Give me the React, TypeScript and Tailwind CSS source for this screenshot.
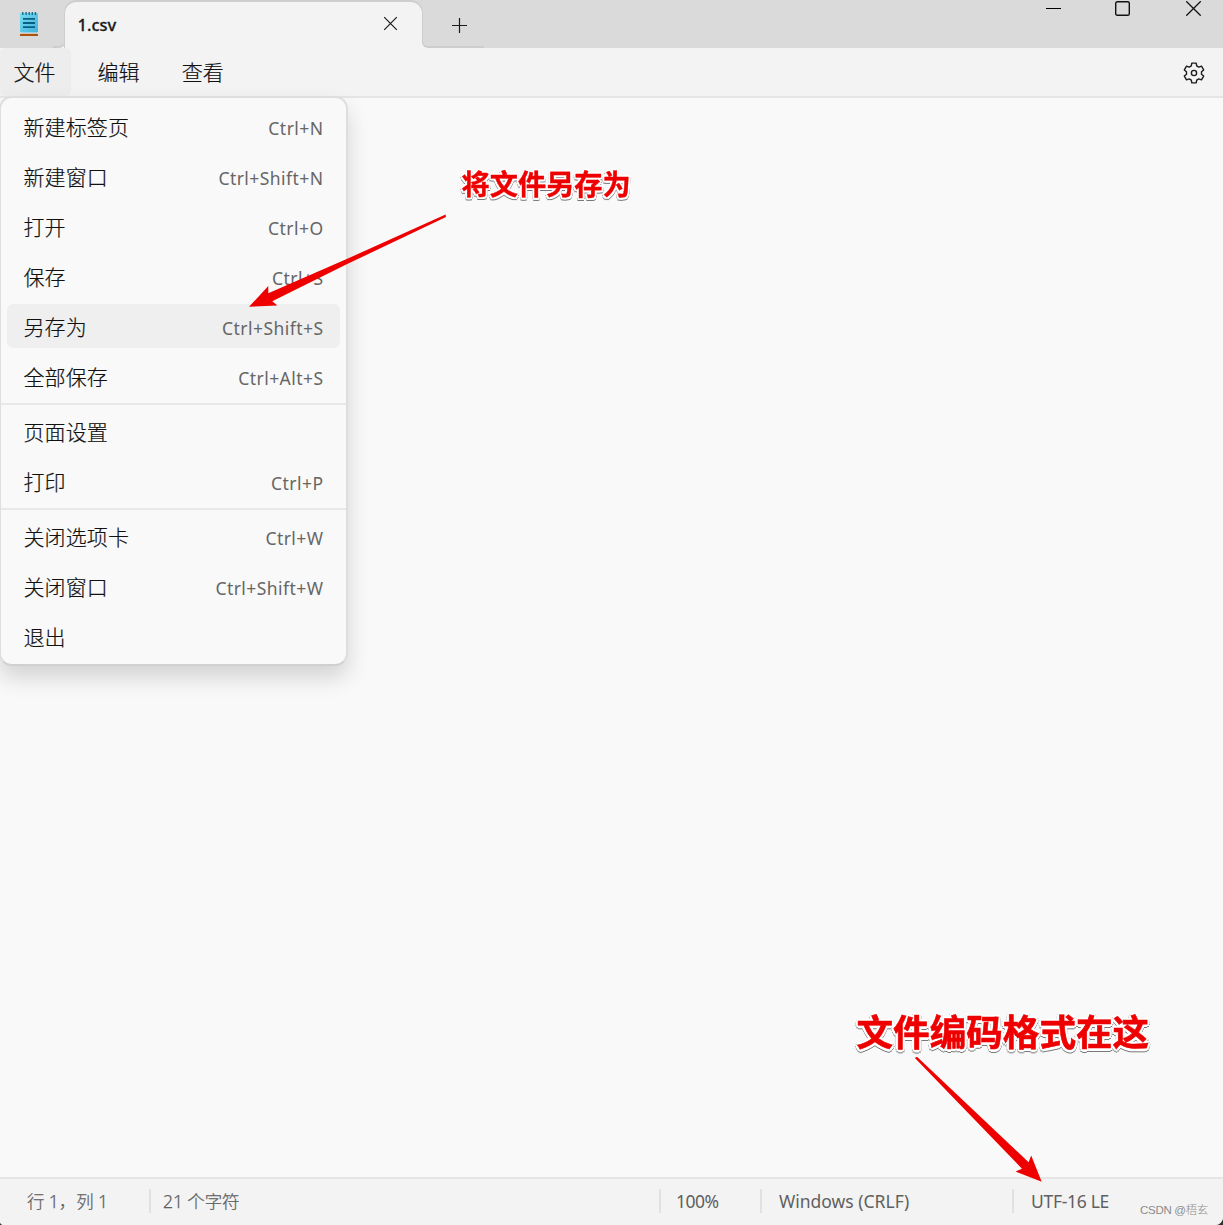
import clsx from 'clsx';

interface MenuItem {
  label: string;
  shortcut?: string;
  active?: boolean;
}

const MENU_GROUPS: MenuItem[][] = [
  [
    { label: '新建标签页', shortcut: 'Ctrl+N' },
    { label: '新建窗口', shortcut: 'Ctrl+Shift+N' },
    { label: '打开', shortcut: 'Ctrl+O' },
    { label: '保存', shortcut: 'Ctrl+S' },
    { label: '另存为', shortcut: 'Ctrl+Shift+S', active: true },
    { label: '全部保存', shortcut: 'Ctrl+Alt+S' },
  ],
  [{ label: '页面设置' }, { label: '打印', shortcut: 'Ctrl+P' }],
  [
    { label: '关闭选项卡', shortcut: 'Ctrl+W' },
    { label: '关闭窗口', shortcut: 'Ctrl+Shift+W' },
    { label: '退出' },
  ],
];

// One tooth pointing up; repeated every 60 degrees.
const TOOTH = [
  [-2.7, -7.1],
  [-2.2, -9.9],
  [2.2, -9.9],
  [2.7, -7.1],
];

function gearPoints() {
  const points: string[] = [];
  for (let i = 0; i < 6; i++) {
    const a = (i * Math.PI) / 3;
    for (const [x, y] of TOOTH) {
      points.push(`${(x * Math.cos(a) - y * Math.sin(a)).toFixed(2)},${(x * Math.sin(a) + y * Math.cos(a)).toFixed(2)}`);
    }
  }
  return points.join(' ');
}

function GearIcon() {
  return (
    <svg width="24" height="24" viewBox="-12 -12 24 24" fill="none" stroke="#1c1c1c" strokeWidth="1.4" strokeLinejoin="round">
      <polygon points={gearPoints()} />
      <circle r="2.6" />
    </svg>
  );
}

function NotepadIcon() {
  return (
    <svg width="18" height="25" viewBox="0 0 18 25">
      <defs>
        <linearGradient id="page" x1="0" y1="0" x2="1" y2="1">
          <stop offset="0" stopColor="#7bdcf0" />
          <stop offset="1" stopColor="#3fb2dc" />
        </linearGradient>
      </defs>
      <rect y="20" width="18" height="2" fill="#e8e8e8" />
      <rect y="21.7" width="18" height="2.3" rx="0.6" fill="#ab5310" />
      <rect y="1" width="18" height="19.4" rx="0.8" fill="url(#page)" />
      <path d="M2.8 0v3M6.1 0v3M9.2 0v3M12.3 0v3M15.4 0v3" stroke="#1a6f8e" strokeWidth="1.4" />
      <path d="M3 6.8h12M3 11h12M3 15.200h12" stroke="#075f84" strokeWidth="1.8" />
    </svg>
  );
}

function TitleBar() {
  return (
    <header className="flex h-12 bg-[#dadada]">
      <div className="flex w-[53px] pt-3 pl-5">
        <NotepadIcon />
      </div>
      <div className="mt-auto flex h-4 w-[12px] bg-[#f3f3f3]">
        <div className="h-4 w-full rounded-br-[6px] border-r border-b-2 border-[#cdcdcd] bg-[#dadada]" />
      </div>
      <div className="-ml-px w-[359px] flex rounded-t-[13px] border-x border-t-2 border-[#cdcdcd] bg-[#f3f3f3]">
        <span className="mt-[11px] ml-[12.5px] text-[16.5px] leading-6 font-medium text-[#1b1b1b] [-webkit-text-stroke:0.3px_#1b1b1b]">1.csv</span>
        <svg className="mt-[14px] mr-6 ml-auto" width="15" height="15" viewBox="0 0 15 15" stroke="#1b1b1b" strokeWidth="1.2">
          <path d="M1.2 1.2l12.6 12.6M13.8 1.2L1.2 13.8" />
        </svg>
      </div>
      <div className="-ml-px mt-auto flex h-3 w-[62px] bg-[#f3f3f3]">
        <div className="h-3 w-full rounded-bl-[6px] border-b-2 border-l border-[#cdcdcd] bg-[#dadada]" />
      </div>
      <svg className="mt-[18px] -ml-8" width="15" height="15" viewBox="0 0 15 15" stroke="#1b1b1b" strokeWidth="1.2">
        <path d="M7.5 0v15M0 7.5h15" />
      </svg>
      <div className="mt-px mr-[22px] ml-auto flex">
        <svg className="mr-[54px]" width="15" height="15" viewBox="0 0 15 15" stroke="#000">
          <path d="M0 7.5h15" />
        </svg>
        <svg className="mr-14" width="15" height="15" viewBox="0 0 15 15" fill="none" stroke="#111" strokeWidth="1.4">
          <rect x="0.7" y="0.7" width="13.6" height="13.6" rx="1.6" />
        </svg>
        <svg width="15" height="15" viewBox="0 0 15 15" stroke="#111" strokeWidth="1.3">
          <path d="M0.3 0.3l14.4 14.4M14.7 0.3L0.3 14.7" />
        </svg>
      </div>
    </header>
  );
}

function MenuBar() {
  return (
    <nav className="flex h-[50px] border-b-2 border-[#e5e5e5] bg-[#f3f3f3] text-[21px] leading-[49px] font-light tracking-[0.1px] text-[#111] [-webkit-text-stroke:0.2px_#111]">
      <span className="w-[71px] rounded-md bg-[#ededed] pl-[13.5px]">文件</span>
      <span className="ml-[26.5px]">编辑</span>
      <span className="ml-[42px]">查看</span>
      <span className="mt-[13px] mr-[17px] ml-auto">
        <GearIcon />
      </span>
    </nav>
  );
}

function FileMenu() {
  return (
    <div className="absolute top-[96px] -left-px w-[349px] rounded-[13px] border-2 border-[#dedede] border-b-[#d0d0d0] bg-[#f9f9f9] py-[3px] shadow-[0_12px_22px_rgba(0,0,0,0.15)]">
      {MENU_GROUPS.map((group, i) => (
        <div key={i}>
          {i > 0 && <div className="mt-[2px] mb-px h-[2px] bg-[#e8e8e8]" />}
          {group.map((item) => (
            <div key={item.label} className="h-[50px] px-[6px] py-[3px]">
              <div
                className={clsx(
                  'flex h-11 items-center justify-between rounded-md px-[16.5px]',
                  item.active && 'bg-[#efefef]',
                )}
              >
                <span className="pt-[2px] text-[21px] leading-[46px] font-light tracking-[0.1px] text-[#111] [-webkit-text-stroke:0.2px_#111]">
                  {item.label}
                </span>
                <span className="pt-[5px] text-[17.5px] tracking-[0.45px] text-[#666]">{item.shortcut}</span>
              </div>
            </div>
          ))}
        </div>
      ))}
    </div>
  );
}

function Divider() {
  return <span className="mt-[10px] h-6 w-[2px] bg-[#e1e1e1]" />;
}

function StatusBar() {
  return (
    <footer className="flex h-12 border-t-2 border-[#e5e5e5] bg-[#f3f3f3] text-[17.5px] leading-[44px] whitespace-nowrap text-[#606060]">
      <span className="w-[149px] pl-[27px] font-light tracking-[-0.1px] [-webkit-text-stroke:0.25px_#606060]">行 1，列 1</span>
      <Divider />
      <span className="w-[508px] pl-3 font-light tracking-[-0.1px] [-webkit-text-stroke:0.25px_#606060]">21 个字符</span>
      <Divider />
      <span className="w-[99px] pl-[15px] tracking-[-0.5px]">100%</span>
      <Divider />
      <span className="w-[250px] pl-[17px]">Windows (CRLF)</span>
      <Divider />
      <span className="pl-[17px] tracking-[-0.3px]">UTF-16 LE</span>
    </footer>
  );
}

function Annotations() {
  return (
    <>
      <div className="absolute top-[163px] left-[461.5px] text-[28.2px] leading-[42px] font-bold whitespace-nowrap text-[#ee0000] [-webkit-text-stroke:0.4px_#ee0000] [filter:drop-shadow(0.5px_1px_0.6px_#777)] [text-shadow:2px_0_#fff,-2px_0_#fff,0_2px_#fff,0_-2px_#fff,1.5px_1.5px_#fff,-1.5px_1.5px_#fff,1.5px_-1.5px_#fff,-1.5px_-1.5px_#fff]">
        将文件另存为
      </div>
      <div className="absolute top-[1005px] left-[856.5px] text-[36.6px] leading-[54px] font-bold whitespace-nowrap text-[#ee0000] [-webkit-text-stroke:0.6px_#ee0000] [filter:drop-shadow(0.5px_1px_0.6px_#777)] [text-shadow:2.5px_0_#fff,-2.5px_0_#fff,0_2.5px_#fff,0_-2.5px_#fff,1.8px_1.8px_#fff,-1.8px_1.8px_#fff,1.8px_-1.8px_#fff,-1.8px_-1.8px_#fff]">
        文件编码格式在这
      </div>
      <svg className="absolute top-0 left-0" width="1223" height="1225" viewBox="0 0 1223 1225" fill="#ee0000">
        <path d="M445.6 214.6L346.7 259L268.3 293.3L268.3 286L249 306.8L277.3 305.5L272.3 301.3L346.7 264.3L446 217Z" />
        <path d="M914.9 1058L1022 1168.7L1015.6 1171.5L1041.7 1181.8L1031.2 1155.6L1028.6 1162.2L917 1056.8Z" />
      </svg>
      <span className="absolute top-[1202px] left-[1140px] font-['Liberation_Sans','Noto_Sans_CJK_SC',sans-serif] text-[11.5px] leading-4 font-light tracking-[-0.3px] whitespace-nowrap text-[#8c8c8c]">
        CSDN @梧玄
      </span>
    </>
  );
}

export default function App() {
  return (
    <div className="h-[1225px] w-[1223px] bg-[#333]">
      <div className="relative flex h-full flex-col overflow-hidden rounded-br-[8px] rounded-bl-[4px] bg-[#f9f9f9] font-['Noto_Sans','Noto_Sans_CJK_SC',sans-serif]">
        <TitleBar />
        <MenuBar />
        <main className="flex-1" />
        <StatusBar />
        <FileMenu />
        <Annotations />
      </div>
    </div>
  );
}
